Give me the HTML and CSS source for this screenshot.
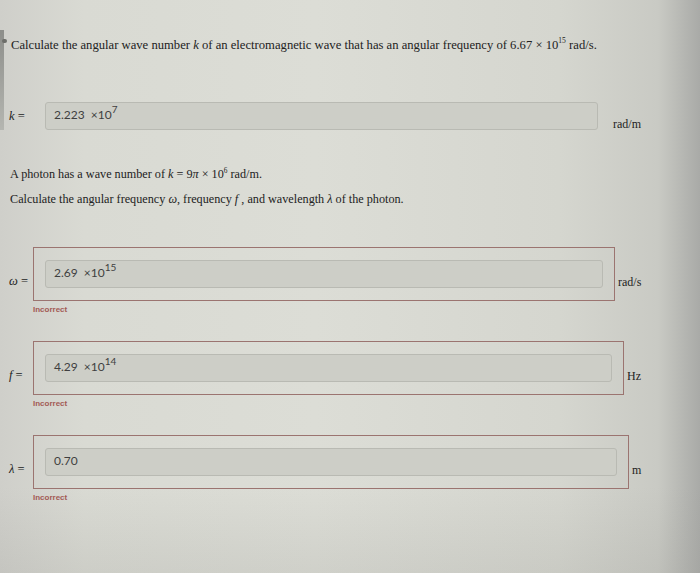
FILE: index.html
```html
<!DOCTYPE html>
<html>
<head>
<meta charset="utf-8">
<link rel="stylesheet" href="styles.css">
</head>
<body>
<div class="page">
  <div class="edge"></div>
  <div class="content">
    <div class="prompt-row">
      <span class="marker"></span>
      <p class="prompt">Calculate the angular wave number <i>k</i> of an electromagnetic wave that has an angular frequency of 6.67 × 10<sup>15</sup> rad/s.</p>
    </div>

    <div class="answer answer-k">
      <div class="row">
        <span class="label label-k"><i>k</i> =</span>
        <div class="box box-plain box-k">
          <div class="input">2.223 <span class="times">×10<sup>7</sup></span></div>
        </div>
        <span class="unit">rad/m</span>
      </div>
    </div>

    <p class="text text-first">A photon has a wave number of <i>k</i> = 9<i>π</i> × 10<sup>6</sup> rad/m.</p>
    <p class="text">Calculate the angular frequency <i>ω</i>, frequency <i>f</i> , and wavelength <i>λ</i> of the photon.</p>

    <div class="answers">
      <div class="answer">
        <div class="row">
          <span class="label"><i>ω</i> =</span>
          <div class="box box-w">
            <div class="input">2.69 <span class="times">×10<sup>15</sup></span></div>
          </div>
          <span class="unit">rad/s</span>
        </div>
        <div class="status">Incorrect</div>
      </div>

      <div class="answer">
        <div class="row">
          <span class="label"><i>f</i> =</span>
          <div class="box box-f">
            <div class="input">4.29 <span class="times">×10<sup>14</sup></span></div>
          </div>
          <span class="unit">Hz</span>
        </div>
        <div class="status">Incorrect</div>
      </div>

      <div class="answer">
        <div class="row">
          <span class="label"><i>λ</i> =</span>
          <div class="box box-l">
            <div class="input">0.70</div>
          </div>
          <span class="unit">m</span>
        </div>
        <div class="status">Incorrect</div>
      </div>
    </div>
  </div>
</div>
</body>
</html>
```

FILE: styles.css
```css
html, body {
  margin: 0;
  padding: 0;
}

body {
  width: 700px;
  height: 573px;
  overflow: hidden;
  background: linear-gradient(90deg, #cfcfca 0%, #d9dad3 12%, #dcddd6 45%, #d5d6cf 80%, #c9cac4 94%, #a9aaa7 100%);
  font-family: "Liberation Serif", "Times New Roman", serif;
  color: #222222;
}

.page {
  display: flex;
  height: 573px;
  background: linear-gradient(180deg, rgba(255,255,255,0) 0%, rgba(255,255,255,0) 85%, rgba(150,150,145,0.18) 100%);
}

.edge {
  width: 4px;
  flex: none;
  margin-top: 30px;
  height: 100px;
  background: linear-gradient(180deg, #8d8e8a, #b5b6b1);
}

.content {
  flex: 1;
  padding-left: 4px;
}

.prompt-row {
  display: flex;
  align-items: center;
  margin-top: 37px;
  margin-left: -6px;
}

.marker {
  width: 5px;
  height: 4px;
  border-radius: 2px;
  background: #6d6e6a;
  margin-right: 4px;
  margin-top: -8px;
}

.prompt {
  margin: 0;
  font-size: 12.65px;
  line-height: 16px;
}

sup {
  font-size: 0.6em;
  line-height: 0;
  vertical-align: 0.75em;
}

.text {
  margin: 0;
  font-size: 12.2px;
  line-height: 16px;
  margin-left: 2px;
}

.text + .text {
  margin-top: 9px;
}

.text-first {
  margin-top: 23px;
}

.answer-k {
  margin-top: 36px;
}

.answers {
  margin-top: 40px;
  display: flex;
  flex-direction: column;
  gap: 25px;
}

.row {
  display: flex;
  align-items: center;
}

.label {
  width: 25px;
  flex: none;
  font-size: 12.5px;
  padding-top: 14px;
  padding-left: 1px;
  box-sizing: border-box;
  white-space: nowrap;
}

.label-k {
  padding-top: 0;
}

.box {
  flex: none;
  box-sizing: border-box;
  height: 54px;
  padding: 12px 11px;
  border: 1.5px solid #9b7470;
}

.box-plain {
  border-color: transparent;
}

.box-k { width: 577px; }
.box-w { width: 582px; }
.box-f { width: 591px; }
.box-l { width: 596px; }

.input {
  box-sizing: border-box;
  height: 100%;
  background: #cdcec7;
  border: 1px solid #b9bab3;
  border-radius: 3px;
  padding: 3px 8px 0;
  font-family: Lato, "Liberation Sans", sans-serif;
  font-size: 12px;
  line-height: 18px;
  color: #3f3f3f;
}

.times {
  margin-left: 3px;
}

.input sup {
  font-size: 10px;
  vertical-align: 6px;
}

.unit {
  margin-left: 3px;
  padding-top: 16px;
  font-size: 12px;
}

.status {
  margin-left: 25px;
  margin-top: 3px;
  font-family: "Liberation Sans", Arial, sans-serif;
  font-size: 8px;
  font-weight: bold;
  line-height: 12px;
  color: #a35a55;
}
```
